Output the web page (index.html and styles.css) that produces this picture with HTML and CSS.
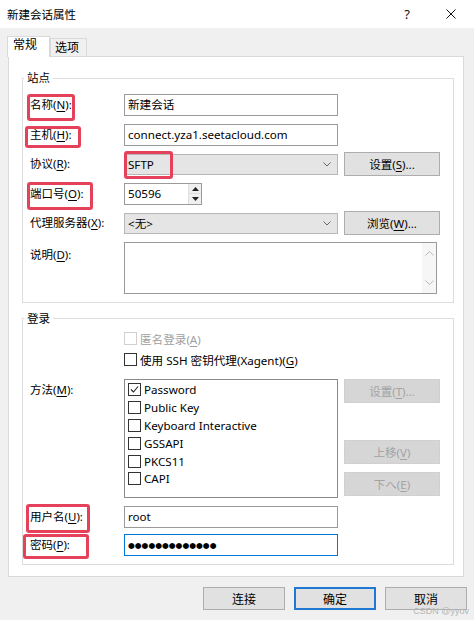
FILE: index.html
```html
<!DOCTYPE html>
<html lang="zh-CN">
<head>
<meta charset="utf-8">
<title>新建会话属性</title>
<link rel="stylesheet" href="styles.css">
</head>
<body>
<div class="window">
  <div class="titlebar">
    <span class="title">新建会话属性</span>
    <span class="tb-btn tb-help">?</span>
    <span class="tb-btn tb-close">
      <svg width="10" height="10" viewBox="0 0 10 10"><path d="M0.5 0.5L9.5 9.5M9.5 0.5L0.5 9.5" stroke="#111" stroke-width="1" fill="none"/></svg>
    </span>
  </div>
  <div class="client">
    <div class="tabs">
      <div class="tab active">常规</div>
      <div class="tab">选项</div>
    </div>
    <div class="panel">
      <fieldset class="group group-site">
        <legend>站点</legend>
        <div class="rows">
          <div class="row">
            <label class="lbl"><span class="mark mark-name"></span>名称(<u>N</u>):</label>
            <div class="input w-main">新建会话</div>
          </div>
          <div class="row">
            <label class="lbl"><span class="mark mark-host"></span>主机(<u>H</u>):</label>
            <div class="input w-main">connect.yza1.seetacloud.com</div>
          </div>
          <div class="row">
            <label class="lbl">协议(<u>R</u>):</label>
            <div class="select w-main"><span class="mark mark-sftp"></span><span class="sel-text">SFTP</span>
              <svg class="chev" width="8" height="5" viewBox="0 0 8 5"><path d="M0.5 0.5L4 4L7.5 0.5" stroke="#666" fill="none"/></svg>
            </div>
            <button class="btn side">设置(<u>S</u>)...</button>
          </div>
          <div class="row">
            <label class="lbl"><span class="mark mark-port"></span>端口号(<u>O</u>):</label>
            <div class="spin">
              <span class="spin-text">50596</span>
              <span class="spin-arrows">
                <span class="arr"><svg width="7" height="4" viewBox="0 0 7 4"><path d="M0 4L3.5 0L7 4Z" fill="#222"/></svg></span>
                <span class="arr"><svg width="7" height="4" viewBox="0 0 7 4"><path d="M0 0L3.5 4L7 0Z" fill="#222"/></svg></span>
              </span>
            </div>
          </div>
          <div class="row">
            <label class="lbl">代理服务器(<u>X</u>):</label>
            <div class="select w-main"><span class="sel-text">&lt;无&gt;</span>
              <svg class="chev" width="8" height="5" viewBox="0 0 8 5"><path d="M0.5 0.5L4 4L7.5 0.5" stroke="#666" fill="none"/></svg>
            </div>
            <button class="btn side">浏览(<u>W</u>)...</button>
          </div>
          <div class="row row-tall">
            <label class="lbl lbl-top">说明(<u>D</u>):</label>
            <div class="textarea">
              <div class="ta-text"></div>
              <div class="ta-scroll">
                <svg width="9" height="5" viewBox="0 0 9 5"><path d="M0.5 4.5L4.5 0.5L8.5 4.5" stroke="#bbb" fill="none"/></svg>
                <svg width="9" height="5" viewBox="0 0 9 5"><path d="M0.5 0.5L4.5 4.5L8.5 0.5" stroke="#bbb" fill="none"/></svg>
              </div>
            </div>
          </div>
        </div>
      </fieldset>

      <fieldset class="group group-login">
        <legend>登录</legend>
        <div class="checkrow first">
          <span class="cb disabled"></span><span class="cb-label disabled-text">匿名登录(<u>A</u>)</span>
        </div>
        <div class="checkrow">
          <span class="cb"></span><span class="cb-label">使用 SSH 密钥代理(Xagent)(<u>G</u>)</span>
        </div>
        <div class="row row-method">
          <label class="lbl lbl-method">方法(<u>M</u>):</label>
          <div class="listbox">
            <div class="li"><span class="cb checked"><svg width="11" height="11" viewBox="0 0 11 11"><path d="M2 5.5L4.5 8L9 2.5" stroke="#222" stroke-width="1.1" fill="none"/></svg></span>Password</div>
            <div class="li"><span class="cb"></span>Public Key</div>
            <div class="li"><span class="cb"></span>Keyboard Interactive</div>
            <div class="li"><span class="cb"></span>GSSAPI</div>
            <div class="li"><span class="cb"></span>PKCS11</div>
            <div class="li"><span class="cb"></span>CAPI</div>
          </div>
          <div class="method-btns">
            <button class="btn side disabled">设置(<u>T</u>)...</button>
            <button class="btn side disabled btn-up">上移(<u>V</u>)</button>
            <button class="btn side disabled btn-down">下へ(<u>E</u>)</button>
          </div>
        </div>
        <div class="row row-user">
          <label class="lbl"><span class="mark mark-user"></span>用户名(<u>U</u>):</label>
          <div class="input w-main">root</div>
        </div>
        <div class="row row-pass">
          <label class="lbl"><span class="mark mark-pass"></span>密码(<u>P</u>):</label>
          <div class="input w-main focus"><span class="dots">●●●●●●●●●●●●●</span></div>
        </div>
      </fieldset>
    </div>
    <div class="footer">
      <button class="btn foot">连接</button>
      <button class="btn foot default">确定</button>
      <button class="btn foot">取消</button>
    </div>
    <div class="watermark">CSDN @yyov</div>
  </div>
</div>
</body>
</html>
```
FILE: styles.css
```css
* { box-sizing: border-box; }
html, body { margin: 0; padding: 0; }
body {
  width: 474px;
  height: 620px;
  overflow: hidden;
  background: #fff;
  font-family: "Segoe UI", "Noto Sans", "Noto Sans CJK SC", sans-serif;
  font-size: 11.5px;
  color: #000;
}
u { text-decoration: underline; text-underline-offset: 2px; }

.window { height: 620px; display: flex; flex-direction: column; }

.titlebar {
  height: 28px;
  flex: none;
  display: flex;
  align-items: center;
  padding-left: 7px;
  padding-right: 8px;
  background: #fff;
}
.title { flex: 1; font-size: 11.5px; }
.tb-btn { width: 30px; display: flex; justify-content: center; align-items: center; height: 28px; }
.tb-help { font-size: 13px; margin-right: 14px; color: #111; }

.client {
  flex: 1;
  position: relative;
  background: #f0f0f0;
  padding: 8px 10px 0 8px;
}

.tabs { display: flex; align-items: flex-end; height: 20px; }
.tab {
  height: 18px;
  line-height: 17px;
  border: 1px solid #d9d9d9;
  border-bottom: none;
  background: #f0f0f0;
  padding-left: 4px;
  width: 37px;
  font-size: 12px;
}
.tab.active {
  position: relative;
  z-index: 1;
  height: 21px;
  margin-bottom: -1px;
  margin-left: -1px;
  width: 43px;
  background: #fff;
  padding-left: 5px;
  line-height: 16px;
}

.panel {
  height: 521px;
  background: #fff;
  border: 1px solid #d9d9d9;
  padding: 13px 9px 0 13px;
}

.group {
  margin: 0;
  min-width: 0;
  border: 1px solid #dcdcdc;
  padding: 8px 0 8px 7px;
}
.group legend {
  padding: 0 3px;
  margin-left: -6px;
  line-height: 16px;
  font-size: 11.5px;
}
.group-login { margin-top: 8px; padding-top: 2px; }

.rows { display: flex; flex-direction: column; gap: 7.6px; }
.row { display: flex; align-items: center; height: 22px; }
.row-tall { height: 52px; align-items: flex-start; }

.lbl { position: relative; width: 94px; flex: none; line-height: 16px; }
.lbl-top { padding-top: 5px; }

.input {
  height: 22px;
  border: 1px solid #9a9a9a;
  background: #fff;
  padding-left: 3px;
  line-height: 20px;
  font-size: 11.6px;
  white-space: nowrap;
  overflow: hidden;
}
.input.focus { border-color: #0078d7; }
.w-main { width: 214px; flex: none; }

.select {
  position: relative;
  height: 21px;
  border: 1px solid #b7b7b7;
  background: #e5e5e5;
  display: flex;
  align-items: center;
  padding-left: 3px;
  font-size: 11.6px;
}
.sel-text { flex: 1; }
.chev { margin-right: 6px; }

.btn {
  font-family: inherit;
  font-size: 11.5px;
  color: #000;
  background: #e1e1e1;
  border: 1px solid #adadad;
  padding: 0;
  margin: 0;
}
.btn.side { width: 96px; height: 24px; margin-left: 6px; }
.btn.disabled { background: #d6d6d6; border-color: #d0d0d0; color: #a3a3a3; }

.spin {
  width: 78px;
  height: 22px;
  border: 1px solid #9a9a9a;
  display: flex;
  font-size: 11.6px;
}
.spin-text { flex: 1; padding-left: 3px; line-height: 20px; }
.spin-arrows { width: 13px; display: flex; flex-direction: column; border-left: 1px solid #e0e0e0; }
.arr { flex: 1; display: flex; align-items: center; justify-content: center; background: #f0f0f0; }
.arr + .arr { border-top: 1px solid #e0e0e0; }

.textarea {
  width: 313px;
  height: 52px;
  border: 1px solid #9a9a9a;
  display: flex;
}
.ta-text { flex: 1; }
.ta-scroll {
  width: 14px;
  background: #f6f6f6;
  display: flex;
  flex-direction: column;
  justify-content: space-between;
  align-items: center;
  padding: 8px 0 8px;
}

.checkrow { display: flex; align-items: center; height: 20px; padding-left: 94px; }
.checkrow + .checkrow { margin-top: 1px; }
.cb {
  width: 13px;
  height: 13px;
  border: 1px solid #333;
  background: #fff;
  flex: none;
  display: flex;
  align-items: center;
  justify-content: center;
}
.cb.disabled { border-color: #cfcfcf; }
.cb-label { margin-left: 3px; font-size: 11.6px; }
.disabled-text { color: #a0a0a0; }

.row-method { height: 119px; align-items: flex-start; margin-top: 9px; }
.lbl-method { padding-top: 3px; }
.listbox {
  width: 214px;
  height: 119px;
  border: 1px solid #8a8a8a;
  padding: 1px 0 0 3px;
  font-size: 11.6px;
}
.li { height: 17.8px; display: flex; align-items: center; }
.li .cb { margin-right: 3px; }
.method-btns { display: flex; flex-direction: column; }
.method-btns .btn { margin-left: 6px; }
.btn-up { margin-top: 37px; }
.btn-down { margin-top: 8px; }

.row-user { margin-top: 8px; }
.row-pass { margin-top: 6px; }
.dots { font-family: "DejaVu Sans", sans-serif; font-size: 7.8px; letter-spacing: 0; position: relative; top: -1px; }

.mark {
  position: absolute;
  border: 3px solid #e6415b;
  border-radius: 3px;
  pointer-events: none;
}
.mark-name { left: -3px; top: -3px; width: 48px; height: 27px; }
.mark-host { left: -5px; top: -1px; width: 56px; height: 22px; }
.mark-port { left: -3px; top: -4px; width: 66px; height: 28px; }
.mark-user { left: -4px; top: -5px; width: 64px; height: 29px; }
.mark-pass { left: -7px; top: -3px; width: 66px; height: 25px; }
.mark-sftp { left: -1px; top: -4px; width: 49px; height: 28px; }

.footer {
  display: flex;
  justify-content: flex-end;
  gap: 9px;
  margin-top: 10px;
  margin-right: -3px;
}
.btn.foot { width: 82px; height: 23px; font-size: 12px; }
.btn.default { border: 2px solid #1f78d1; }

.watermark {
  position: absolute;
  right: 5px;
  bottom: 4px;
  font-size: 9px;
  color: #b5b5b5;
  font-family: "Liberation Sans", sans-serif;
}
```
